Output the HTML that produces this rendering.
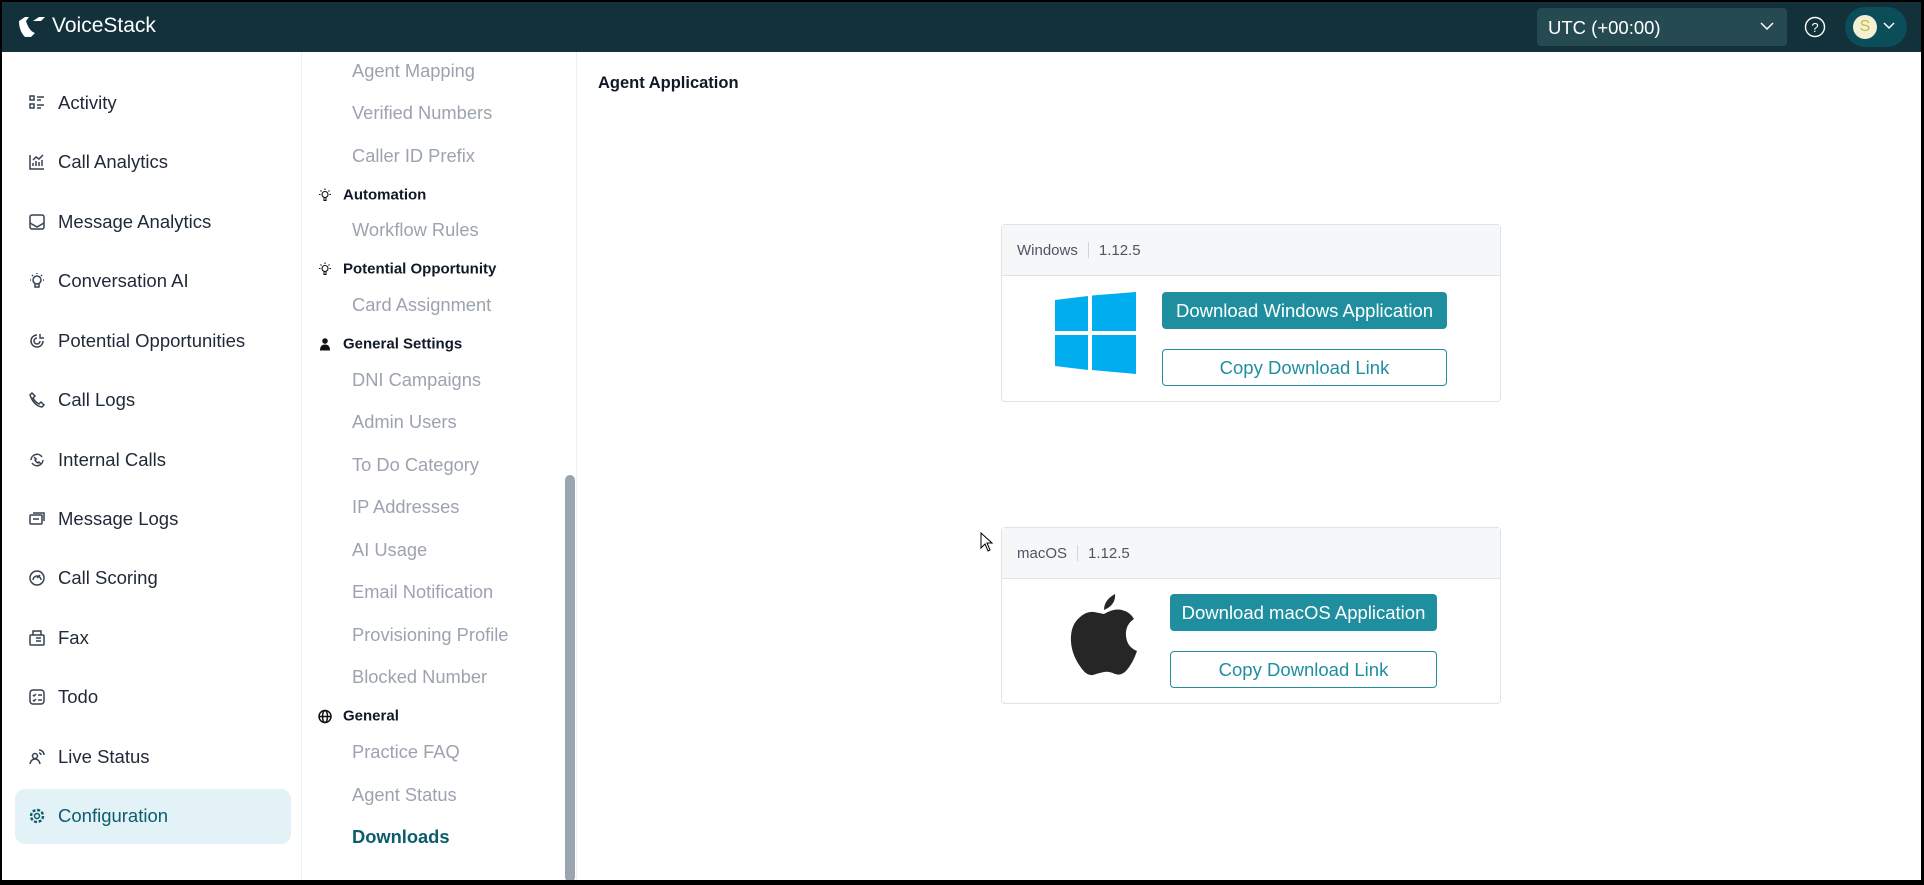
<!DOCTYPE html>
<html><head><meta charset="utf-8"><style>
*{box-sizing:border-box;margin:0;padding:0}
body{width:1924px;height:885px;overflow:hidden;background:#000;font-family:"Liberation Sans",sans-serif;position:relative}
.app{position:absolute;left:2px;top:2px;width:1919px;height:878px;background:#fff;overflow:hidden}
.hdr{position:absolute;left:0;top:0;width:100%;height:50px;background:#12313b}
.abs{position:absolute}
.nav{position:absolute;left:0;top:50px;width:300px;height:830px;border-right:1px solid #eceef1}
.ni{position:absolute;left:26px;height:24px;display:flex;align-items:center;font-size:18.5px;color:#1f2937}
.ni svg{width:18px;height:18px;margin-right:12px;fill:none;stroke:#374151;stroke-width:1.5}
.sub{position:absolute;left:300px;top:50px;width:275px;height:830px;border-right:1px solid #eceef1}
.si{position:absolute;left:50px;font-size:18.3px;color:#9ca3af;transform:translateY(-50%)}
.sh{position:absolute;left:16px;font-size:15px;font-weight:bold;color:#111827;transform:translateY(-50%);display:flex;align-items:center}
.sh svg{width:14px;height:14px;margin-right:11px}
.card{position:absolute;left:999px;width:500px;border:1px solid #dfe3e8;border-radius:4px;background:#fff}
.ch{height:51px;background:#f6f7f9;border-bottom:1px solid #dfe3e8;display:flex;align-items:center;padding-left:15px;font-size:15px;color:#4b5563}
.ch i{display:inline-block;width:1px;height:16px;background:#d1d5db;margin:0 10px}
.btn{position:absolute;height:37px;border-radius:4px;font-size:18.5px;display:flex;align-items:center;justify-content:center}
.b1{background:#1f8fa0;color:#fff}
.b2{border:1px solid #1f8fa0;color:#1f8fa0;background:#fff}
</style></head><body>
<div class="app">
<div class="hdr">
 <svg class="abs" style="left:15px;top:13px" width="30" height="24" viewBox="0 0 30 24"><path d="M2 6 L8 2 L12 2 L9 6 Q12 16 18 18 L14 22 L8 22 Q2 16 2 6Z" fill="#fff"/><path d="M16 6 L22 2 L28 2 L24 6Z" fill="#fff"/></svg>
 <div class="abs" style="left:50px;top:12px;color:#fff;font-size:21px">VoiceStack</div>
 <div class="abs" style="left:1535px;top:6px;width:250px;height:38px;background:#254a52;border-radius:4px;color:#fff;font-size:18.5px;padding:9px 0 0 11px">UTC (+00:00)
  <svg class="abs" style="right:12px;top:13px" width="16" height="10" viewBox="0 0 16 10"><path d="M2 2 L8 8 L14 2" stroke="#fff" stroke-width="1.5" fill="none"/></svg></div>
 <svg class="abs" style="left:1802px;top:14px" width="22" height="22" viewBox="0 0 22 22"><circle cx="11" cy="11" r="9.5" stroke="#fff" stroke-width="1.4" fill="none"/><text x="11" y="16" font-size="13" fill="#fff" text-anchor="middle" font-family="Liberation Sans">?</text></svg>
 <div class="abs" style="left:1843px;top:5px;width:62px;height:40px;border-radius:20px;background:#0c4d5a">
  <div class="abs" style="left:8px;top:8px;width:24px;height:24px;border-radius:50%;background:#f3f0d4;color:#c9b84a;font-size:16px;text-align:center;line-height:24px">S</div>
  <svg class="abs" style="left:38px;top:15px" width="12" height="8" viewBox="0 0 12 8"><path d="M1 1 L6 6 L11 1" stroke="#fff" stroke-width="1.5" fill="none"/></svg></div>
</div>
<div class="nav">
 <div class="ni" style="top:39px"><svg viewBox="0 0 18 18"><rect x="2" y="2" width="4" height="4"/><rect x="2" y="10" width="4" height="4"/><path d="M9 3h7M9 6h4M9 11h7M9 14h4"/></svg>Activity</div>
 <div class="ni" style="top:98px"><svg viewBox="0 0 18 18"><path d="M2 2v14h14M5 13v-3M8 13v-5M11 13v-4M14 13v-6M5 7l3-3 3 2 4-4"/></svg>Call Analytics</div>
 <div class="ni" style="top:158px"><svg viewBox="0 0 18 18"><rect x="2" y="2" width="14" height="14" rx="2"/><path d="M2 10l7 4 7-4"/></svg>Message Analytics</div>
 <div class="ni" style="top:217px"><svg viewBox="0 0 18 18"><circle cx="9" cy="8" r="4"/><path d="M7 12v3h4v-3M9 1v1M2 8h1M15 8h1M4 3l1 1M14 3l-1 1"/></svg>Conversation AI</div>
 <div class="ni" style="top:277px"><svg viewBox="0 0 18 18"><path d="M15 9a6 6 0 1 1-6-6M12 9a3 3 0 1 1-3-3M12 2v4h4"/></svg>Potential Opportunities</div>
 <div class="ni" style="top:336px"><svg viewBox="0 0 18 18"><path d="M4 2l3 3-2 2q2 4 6 6l2-2 3 3-2 2Q6 15 2 4Z"/></svg>Call Logs</div>
 <div class="ni" style="top:396px"><svg viewBox="0 0 18 18"><path d="M3 9a6 6 0 0 1 11-3M15 9a6 6 0 0 1-11 3M6 6l2 2-1 1q1 2 3 3l1-1 2 2"/></svg>Internal Calls</div>
 <div class="ni" style="top:455px"><svg viewBox="0 0 18 18"><rect x="2" y="5" width="12" height="9" rx="1"/><path d="M5 3h11v8M5 9h6"/></svg>Message Logs</div>
 <div class="ni" style="top:514px"><svg viewBox="0 0 18 18"><circle cx="9" cy="9" r="7"/><path d="M9 9l3-3M5 11a4 4 0 0 1 8 0"/></svg>Call Scoring</div>
 <div class="ni" style="top:574px"><svg viewBox="0 0 18 18"><rect x="2" y="6" width="14" height="10" rx="1"/><path d="M5 6V2h8v4M8 9h5M8 12h5"/></svg>Fax</div>
 <div class="ni" style="top:633px"><svg viewBox="0 0 18 18"><rect x="2" y="2" width="14" height="14" rx="3"/><path d="M5 7l1 1 2-2M10 7h4M5 12l1 1 2-2M10 12h4"/></svg>Todo</div>
 <div class="ni" style="top:693px"><svg viewBox="0 0 18 18"><circle cx="7" cy="8" r="2.5"/><path d="M2 16q1-5 5-5t5 5M11 2a5 5 0 0 1 5 5M11 5a2 2 0 0 1 2 2"/></svg>Live Status</div>
 <div class="abs" style="left:13px;top:737px;width:276px;height:55px;background:#e3f2f6;border-radius:10px"></div>
 <div class="ni" style="top:752px;color:#0b5d6e"><svg viewBox="0 0 18 18" style="stroke:#0b5d6e"><circle cx="9" cy="9" r="2.5"/><circle cx="9" cy="9" r="6" stroke-dasharray="3 1.7" stroke-width="2.4"/></svg>Configuration</div>
</div>
<div class="sub">
 <div class="si" style="top:19px">Agent Mapping</div>
 <div class="si" style="top:61px">Verified Numbers</div>
 <div class="si" style="top:104px">Caller ID Prefix</div>
 <div class="sh" style="top:143px"><svg viewBox="0 0 14 14" fill="none" stroke="#111" stroke-width="1.1"><circle cx="7" cy="6" r="3"/><path d="M6 9v3h2V9M7 0v1.5M1 6h1.5M11.5 6H13M2.5 2l1 1M11.5 2l-1 1"/></svg>Automation</div>
 <div class="si" style="top:178px">Workflow Rules</div>
 <div class="sh" style="top:217px"><svg viewBox="0 0 14 14" fill="none" stroke="#111" stroke-width="1.1"><circle cx="7" cy="6" r="3"/><path d="M6 9v3h2V9M7 0v1.5M1 6h1.5M11.5 6H13M2.5 2l1 1M11.5 2l-1 1"/></svg>Potential Opportunity</div>
 <div class="si" style="top:253px">Card Assignment</div>
 <div class="sh" style="top:292px"><svg viewBox="0 0 14 14" fill="#111"><circle cx="7" cy="3.5" r="2.8"/><path d="M2 13q0-6 5-6t5 6Z"/></svg>General Settings</div>
 <div class="si" style="top:328px">DNI Campaigns</div>
 <div class="si" style="top:370px">Admin Users</div>
 <div class="si" style="top:413px">To Do Category</div>
 <div class="si" style="top:455px">IP Addresses</div>
 <div class="si" style="top:498px">AI Usage</div>
 <div class="si" style="top:540px">Email Notification</div>
 <div class="si" style="top:583px">Provisioning Profile</div>
 <div class="si" style="top:625px">Blocked Number</div>
 <div class="sh" style="top:664px"><svg viewBox="0 0 14 14" fill="none" stroke="#111" stroke-width="1.5"><circle cx="7" cy="7" r="6"/><ellipse cx="7" cy="7" rx="2.5" ry="6"/><path d="M1 7h12"/></svg>General</div>
 <div class="si" style="top:700px">Practice FAQ</div>
 <div class="si" style="top:743px">Agent Status</div>
 <div class="si" style="top:785px;color:#0b5d6e;font-weight:bold">Downloads</div>
 <div class="abs" style="left:263px;top:423px;width:10px;height:407px;background:#9aa5b1;border-radius:5px"></div>
</div>
<div class="abs" style="left:596px;top:72px;font-size:16.5px;font-weight:bold;color:#111827">Agent Application</div>
<div class="card" style="top:222px;height:178px">
 <div class="ch">Windows<i></i>1.12.5</div>
 <svg class="abs" style="left:53px;top:67px" width="82" height="82" viewBox="0 0 82 82"><path fill="#00adef" d="M0 8 L33 4 V39 H0Z M37 3.5 L81 0 V39 H37Z M0 43 H33 V78 L0 74Z M37 43 H81 V82 L37 78Z"/></svg>
 <div class="btn b1" style="left:160px;top:67px;width:285px">Download Windows Application</div>
 <div class="btn b2" style="left:160px;top:124px;width:285px">Copy Download Link</div>
</div>
<div class="card" style="top:525px;height:177px">
 <div class="ch">macOS<i></i>1.12.5</div>
 <svg class="abs" style="left:68px;top:66px" width="68" height="82" viewBox="0 0 68 82"><path fill="#262626" d="M34 20 Q44 14 52 16 Q60 18 64 25 Q55 31 56 42 Q57 53 67 57 Q63 69 56 77 Q51 82 45 80 Q39 77 34 78 Q29 79 23 81 Q17 82 12 75 Q2 62 1 48 Q0 32 9 24 Q16 17 24 18 Q29 19 34 20Z M34 16 Q34 6 45 0 Q46 11 34 16Z"/></svg>
 <div class="btn b1" style="left:168px;top:66px;width:267px">Download macOS Application</div>
 <div class="btn b2" style="left:168px;top:123px;width:267px">Copy Download Link</div>
</div>
<svg class="abs" style="left:978px;top:530px" width="14" height="20" viewBox="0 0 14 20"><path d="M1 1 V16 L5 12 L8 19 L10 18 L7 11 L12 11Z" fill="#fff" stroke="#000" stroke-width="1"/></svg>
</div>
</body></html>
